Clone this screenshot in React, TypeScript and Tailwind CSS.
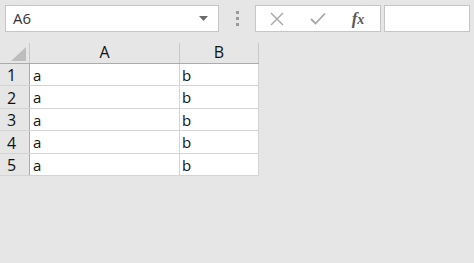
import React from 'react';

const rows = [
  { n: 1, h: 'h-[22px]' },
  { n: 2, h: 'h-[23px]' },
  { n: 3, h: 'h-[22px]' },
  { n: 4, h: 'h-[23px]' },
  { n: 5, h: 'h-[22px]' },
];

const App: React.FC = () => {
  return (
    <div
      className="w-[474px] h-[263px] bg-[#e6e6e6] text-[#111]"
      style={{ fontFamily: '"Open Sans", "Noto Sans", sans-serif' }}
    >
      {/* formula bar */}
      <div className="flex items-start pt-[5px] pl-[5px]">
        <div className="w-[214px] h-[27px] bg-white border border-[#c6c6c6] flex items-center justify-between pl-[7px] pr-[10px]">
          <span className="text-[15px] text-[#333]">A6</span>
          <svg width="9" height="5" viewBox="0 0 9 5">
            <path d="M0 0 L9 0 L4.5 5 Z" fill="#6b6b6b" />
          </svg>
        </div>
        <div className="w-[36px] h-[27px] flex flex-col items-center justify-center gap-[3px]">
          <span className="w-[3px] h-[3px] bg-[#9a9a9a]" />
          <span className="w-[3px] h-[3px] bg-[#9a9a9a]" />
          <span className="w-[3px] h-[3px] bg-[#9a9a9a]" />
        </div>
        <div className="w-[126px] h-[27px] bg-white border border-[#c6c6c6] flex items-center">
          <div className="w-[42px] flex justify-center">
            <svg width="14" height="14" viewBox="0 0 14 14">
              <path d="M1 1 L13 13 M13 1 L1 13" stroke="#a6a6a6" strokeWidth="1.4" fill="none" />
            </svg>
          </div>
          <div className="w-[40px] flex justify-center">
            <svg width="16" height="13" viewBox="0 0 16 13">
              <path d="M1 7 L5.5 11.5 L15 1.5" stroke="#a6a6a6" strokeWidth="1.8" fill="none" />
            </svg>
          </div>
          <div className="w-[40px] flex justify-center">
            <span
              className="text-[17px] italic font-bold text-[#5a5a5a] leading-none"
              style={{ fontFamily: '"Liberation Serif", serif' }}
            >
              f<span className="text-[14px]">x</span>
            </span>
          </div>
        </div>
        <div className="ml-[3px] w-[86px] h-[27px] bg-white border border-[#c6c6c6]" />
      </div>

      {/* grid */}
      <div className="mt-[11px] w-[259px]">
        <div className="flex h-[21px] border-b border-[#ababab]">
          <div className="w-[30px] flex items-end justify-end pr-[3px] pb-[2px] border-r border-[#c8c8c8]">
            <svg width="15" height="14" viewBox="0 0 15 14">
              <path d="M15 0 L15 14 L0 14 Z" fill="#bdbdbd" />
            </svg>
          </div>
          <div className="w-[150px] flex items-end justify-center text-[16px] leading-[21px] border-r border-[#c8c8c8]">
            A
          </div>
          <div className="w-[79px] flex items-end justify-center text-[16px] leading-[21px] border-r border-[#c8c8c8]">
            B
          </div>
        </div>
        {rows.map((r) => (
          <div key={r.n} className={`flex ${r.h} border-b border-[#d4d4d4]`}>
            <div className="w-[30px] flex items-center pl-[7px] pt-[1px] text-[16px] border-r border-[#ababab] bg-[#e6e6e6]">
              {r.n}
            </div>
            <div className="w-[150px] bg-white flex items-center pl-[3px] pt-[1px] text-[15px] border-r border-[#d4d4d4]">
              a
            </div>
            <div className="w-[79px] bg-white flex items-center pl-[2px] pt-[1px] text-[15px] border-r border-[#d4d4d4]">
              b
            </div>
          </div>
        ))}
      </div>
    </div>
  );
};

export default App;
